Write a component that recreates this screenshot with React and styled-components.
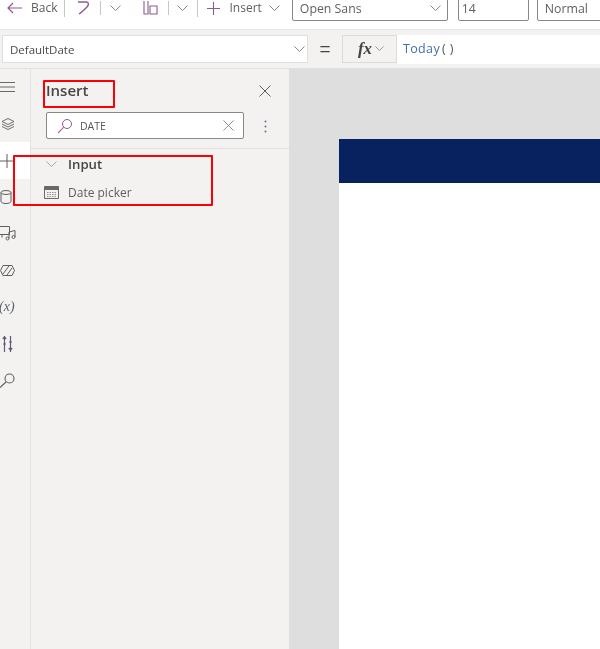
import React from 'react';
import styled, { createGlobalStyle } from 'styled-components';

const Global = createGlobalStyle`
  html, body { margin: 0; padding: 0; background: #fff; overflow: hidden; }
  body { font-family: "Open Sans", "Noto Sans", sans-serif; }
`;

const Page = styled.div`
  width: 600px; height: 649px; display: flex; flex-direction: column;
  overflow: hidden; position: relative; filter: blur(0.45px); background: #fff;
`;
const Toolbar = styled.div`
  height: 29px; flex: none; display: flex; align-items: center; overflow: hidden;
  background: #fff; padding: 0 0 13px 0; box-sizing: border-box;
`;
const Tool = styled.span`
  flex: none; display: flex; align-items: center; margin-left: ${p => p.$ml || 0}px;
  font-size: 12px; color: #605e5c; line-height: 16px;
`;
const Sep = styled.span`
  flex: none; width: 1px; height: ${p => p.$h || 17}px; background: #c8c6c4; margin-left: ${p => p.$ml || 0}px;
`;
const ToolField = styled.div`
  flex: none; box-sizing: border-box; height: 34px; width: ${p => p.$w}px; margin-left: ${p => p.$ml}px; margin-top: -8px;
  border: 1px solid #8a8886; border-radius: 2px; display: flex; align-items: center; justify-content: space-between;
  padding: 8px 6px 0 ${p => p.$pad || 7}px; font-size: 12.3px; color: #605e5c;
`;
const FormulaBar = styled.div`
  height: 40px; flex: none; box-sizing: border-box; background: #f3f2f1; border-top: 1px solid #e6e5e4; border-bottom: 1px solid #e1dfdd;
  display: flex; align-items: center; padding: 0 0 0 2px;
`;
const PropSelect = styled.div`
  width: 306px; height: 28px; box-sizing: border-box; background: #fff; border: 1px solid #e1dfdd; display: flex;
  align-items: center; justify-content: space-between; padding: 0 2px 0 7px; font-size: 11.5px; color: #4a4a4a;
`;
const Equals = styled.span`
  width: 34px; text-align: center; font-size: 19px; color: #444; line-height: 28px; font-family: "Liberation Sans", sans-serif;
`;
const FxBox = styled.div`
  width: 55px; height: 28px; box-sizing: border-box; border: 1px solid #dcdbda; display: flex; align-items: center;
  justify-content: center; gap: 3px; background: #f3f2f1; margin-bottom: 1px;
`;
const FxText = styled.i`
  font-family: "Liberation Serif", serif; font-size: 17px; font-weight: 700; color: #444; line-height: 20px; margin-left: 3px;
`;
const FormulaInput = styled.div`
  flex: 1; height: 29px; box-sizing: border-box; background: #fff; display: flex; align-items: center; padding: 0 0 2px 6px;
  font-size: 12.5px; letter-spacing: 0.35px; color: #3f6fb0;
`;
const Paren = styled.span`
  color: #555; margin-left: 2px; letter-spacing: 4px;
`;
const Body = styled.div`
  flex: 1; display: flex; min-height: 0;
`;
const Rail = styled.div`
  width: 31px; flex: none; box-sizing: border-box; background: #f3f2f1; border-right: 1px solid #e3e2e0;
  display: flex; flex-direction: column; overflow: hidden;
`;
const RailItem = styled.div`
  height: 36.7px; flex: none; width: 30px; display: flex; align-items: center; overflow: hidden;
  background: ${p => p.$active ? '#fff' : 'transparent'};
`;
const RailText = styled.i`
  font-family: "Liberation Serif", serif; font-size: 14px; color: #5d5f70; white-space: nowrap; margin-left: -1px;
`;
const Panel = styled.div`
  width: 258px; flex: none; box-sizing: border-box; background: #f3f2f1; display: flex; flex-direction: column;
`;
const PanelHead = styled.div`
  height: 43px; flex: none; display: flex; align-items: center; justify-content: space-between; padding: 0 18px 0 15px;
  box-sizing: border-box;
`;
const Title = styled.h2`
  margin: 0 0 1px; font-size: 15px; font-weight: 600; color: #484644;
`;
const SearchRow = styled.div`
  height: 37px; flex: none; box-sizing: border-box; display: flex; align-items: flex-start; padding-left: 15px;
  border-bottom: 1px solid #e1dfdd;
`;
const SearchBox = styled.div`
  width: 198px; height: 27px; box-sizing: border-box; background: #fff; border: 1px solid #8a8886; border-radius: 2px;
  display: flex; align-items: center; padding: 0 9px 0 10px;
`;
const SearchText = styled.span`
  flex: 1; margin-left: 7px; font-size: 10.5px; color: #555;
`;
const Kebab = styled.span`
  margin-left: 20px; margin-top: 8px; display: flex;
`;
const GroupRow = styled.div`
  display: flex; align-items: center; height: 30px; padding-left: 15px;
`;
const GroupLabel = styled.span`
  margin-left: 11px; font-size: 13.2px; font-weight: 600; color: #484644;
`;
const ItemRow = styled.div`
  display: flex; align-items: center; height: 26px; padding-left: 13px;
`;
const ItemLabel = styled.span`
  margin-left: 9px; font-size: 12px; color: #605e5c;
`;
const Canvas = styled.div`
  flex: 1; background: #dedede; padding: 70px 0 0 50px; display: flex; min-width: 0;
`;
const Screen = styled.div`
  flex: 1; background: #fff; display: flex; flex-direction: column;
`;
const ScreenHeader = styled.div`
  height: 44px; background: #08215f;
`;
const Callout = styled.div`
  position: absolute; box-sizing: border-box; border: 2.5px solid #fb0007; border-radius: 1px;
  left: ${p => p.$x}px; top: ${p => p.$y}px; width: ${p => p.$w}px; height: ${p => p.$h}px;
`;

const Chevron = ({ w = 11, color = '#7a7876' }) => (
  <svg width={w} height={w * 0.55} viewBox="0 0 11 6" fill="none"><path d="M.5.5l5 5 5-5" stroke={color} strokeWidth=".9" /></svg>
);
const Cross = ({ s = 12, color = '#605e5c' }) => (
  <svg width={s} height={s} viewBox="0 0 12 12" fill="none"><path d="M.5.5l11 11M11.5.5l-11 11" stroke={color} strokeWidth="1" /></svg>
);
const Purple = '#8e5a93';

export default function App() {
  return (
    <Page>
      <Global />
      <Toolbar>
        <Tool $ml={7}>
          <svg width="15" height="12" viewBox="0 0 15 12" fill="none"><path d="M15 6H1M6 1L1 6l5 5" stroke={Purple} strokeWidth="1.2" /></svg>
        </Tool>
        <Tool $ml={9}>Back</Tool>
        <Sep $ml={7} />
        <Tool $ml={12}>
          <svg width="13" height="16" viewBox="0 0 13 16" fill="none"><path d="M1 2h8c3 0 3 3 1 5-2 2-5 5-8 7" stroke={Purple} strokeWidth="1.4" /></svg>
        </Tool>
        <Sep $ml={10} $h={14} />
        <Tool $ml={9}><Chevron /></Tool>
        <Tool $ml={22}>
          <svg width="15" height="14" viewBox="0 0 15 14" fill="none"><path d="M1 0v13h4V0M7 5h7v8H7z" stroke={Purple} strokeWidth="1.1" /></svg>
        </Tool>
        <Sep $ml={10} $h={14} />
        <Tool $ml={8}><Chevron /></Tool>
        <Sep $ml={9} />
        <Tool $ml={9}>
          <svg width="13" height="13" viewBox="0 0 13 13" fill="none"><path d="M6.500 0v13M0 6.500h13" stroke={Purple} strokeWidth="1.1" /></svg>
        </Tool>
        <Tool $ml={9}>Insert</Tool>
        <Tool $ml={7}><Chevron /></Tool>
        <ToolField $w={156} $ml={12}>Open Sans<Chevron /></ToolField>
        <ToolField $w={71} $ml={10} $pad={3}>14</ToolField>
        <ToolField $w={80} $ml={8}>Normal</ToolField>
      </Toolbar>
      <FormulaBar>
        <PropSelect>DefaultDate<Chevron /></PropSelect>
        <Equals>=</Equals>
        <FxBox><FxText>fx</FxText><Chevron w={9} /></FxBox>
        <FormulaInput>Today<Paren>()</Paren></FormulaInput>
      </FormulaBar>
      <Body>
        <Rail>
          <RailItem>
            <svg width="15" height="10" viewBox="0 0 15 10" fill="none"><path d="M0 .5h15M0 5h15M0 9.500h15" stroke="#6b6967" /></svg>
          </RailItem>
          <RailItem>
            <svg width="14" height="13" viewBox="0 0 14 13" fill="none" stroke="#605e5c" strokeWidth=".9" style={{ marginLeft: 1 }}><path d="M7 .5l6 3-6 3-6-3zM1 6l6 3 6-3M1 8.500l6 3 6-3" /></svg>
          </RailItem>
          <RailItem $active>
            <svg width="14" height="14" viewBox="0 0 14 14" fill="none"><path d="M7 0v14M0 7h14" stroke="#605e5c" /></svg>
          </RailItem>
          <RailItem>
            <svg width="12" height="14" viewBox="0 0 12 14" fill="none" stroke="#605e5c"><ellipse cx="6" cy="2.500" rx="5" ry="2" /><path d="M1 2.500v9c0 1.100 2.200 2 5 2s5-.9 5-2v-9" /></svg>
          </RailItem>
          <RailItem>
            <svg width="17" height="16" viewBox="0 0 17 16" fill="none" stroke="#605e5c" style={{ marginTop: -3 }}><path d="M-1 1.500h10.500v8H-1zM2 9.500v3" /><path d="M9 13.500V7l6-1.500V12" /><circle cx="7.500" cy="13.500" r="1.500" /><circle cx="13.500" cy="12" r="1.500" /></svg>
          </RailItem>
          <RailItem>
            <svg width="15" height="11" viewBox="0 0 15 11" fill="none" stroke="#605e5c" style={{ marginTop: -1 }}><path d="M3 .5h9l2.500 5-2.500 5H3L.5 5.500zM3 9l6-8M7 10l5-7" /></svg>
          </RailItem>
          <RailItem>
            <RailText>(x)</RailText>
          </RailItem>
          <RailItem>
            <svg width="11" height="16" viewBox="0 0 11 16" fill="none" stroke="#5f5a78" strokeWidth="1.2" style={{ marginLeft: 2 }}><path d="M2.500 0v16M8.500 0v16" /><path d="M.8 3l1.700-2 1.700 2M6.800 12l1.700 2 1.700-2" /><path d="M1 8h3M7 6h3" /></svg>
          </RailItem>
          <RailItem>
            <svg width="15" height="15" viewBox="0 0 15 15" fill="none" stroke="#605e5c" strokeWidth="1.1"><circle cx="9.500" cy="5.500" r="4.500" /><path d="M6 9l-6 5.500" /></svg>
          </RailItem>
        </Rail>
        <Panel>
          <PanelHead>
            <Title>Insert</Title>
            <Cross />
          </PanelHead>
          <SearchRow>
            <SearchBox>
              <svg width="16" height="16" viewBox="0 0 16 16" fill="none"><circle cx="10" cy="6" r="4.500" stroke="#8a5a94" strokeWidth="1" /><path d="M6.800 9.200L1 15" stroke="#b06a9a" strokeWidth="1.100" /></svg>
              <SearchText>DATE</SearchText>
              <Cross s={11} color="#8a8886" />
            </SearchBox>
            <Kebab>
              <svg width="3" height="13" viewBox="0 0 3 13" fill={Purple}><circle cx="1.500" cy="1.500" r="1" /><circle cx="1.500" cy="6.500" r="1" /><circle cx="1.500" cy="11.500" r="1" /></svg>
            </Kebab>
          </SearchRow>
          <GroupRow>
            <Chevron w={11} color="#a19f9d" />
            <GroupLabel>Input</GroupLabel>
          </GroupRow>
          <ItemRow>
            <svg width="15" height="14" viewBox="0 0 15 14" fill="none" stroke="#6b6967"><path d="M.5 1.500h14v12H.5z" /><path d="M.5 2h14v2.500H.5z" fill="#6b6967" /><path d="M3 7.500h9M3 9.500h9M3 11.500h9" strokeWidth=".7" strokeDasharray="1.500 1" /></svg>
            <ItemLabel>Date picker</ItemLabel>
          </ItemRow>
        </Panel>
        <Canvas>
          <Screen><ScreenHeader /></Screen>
        </Canvas>
      </Body>
      <Callout $x={43} $y={80} $w={72} $h={28} />
      <Callout $x={13} $y={155} $w={200} $h={51} />
    </Page>
  );
}
